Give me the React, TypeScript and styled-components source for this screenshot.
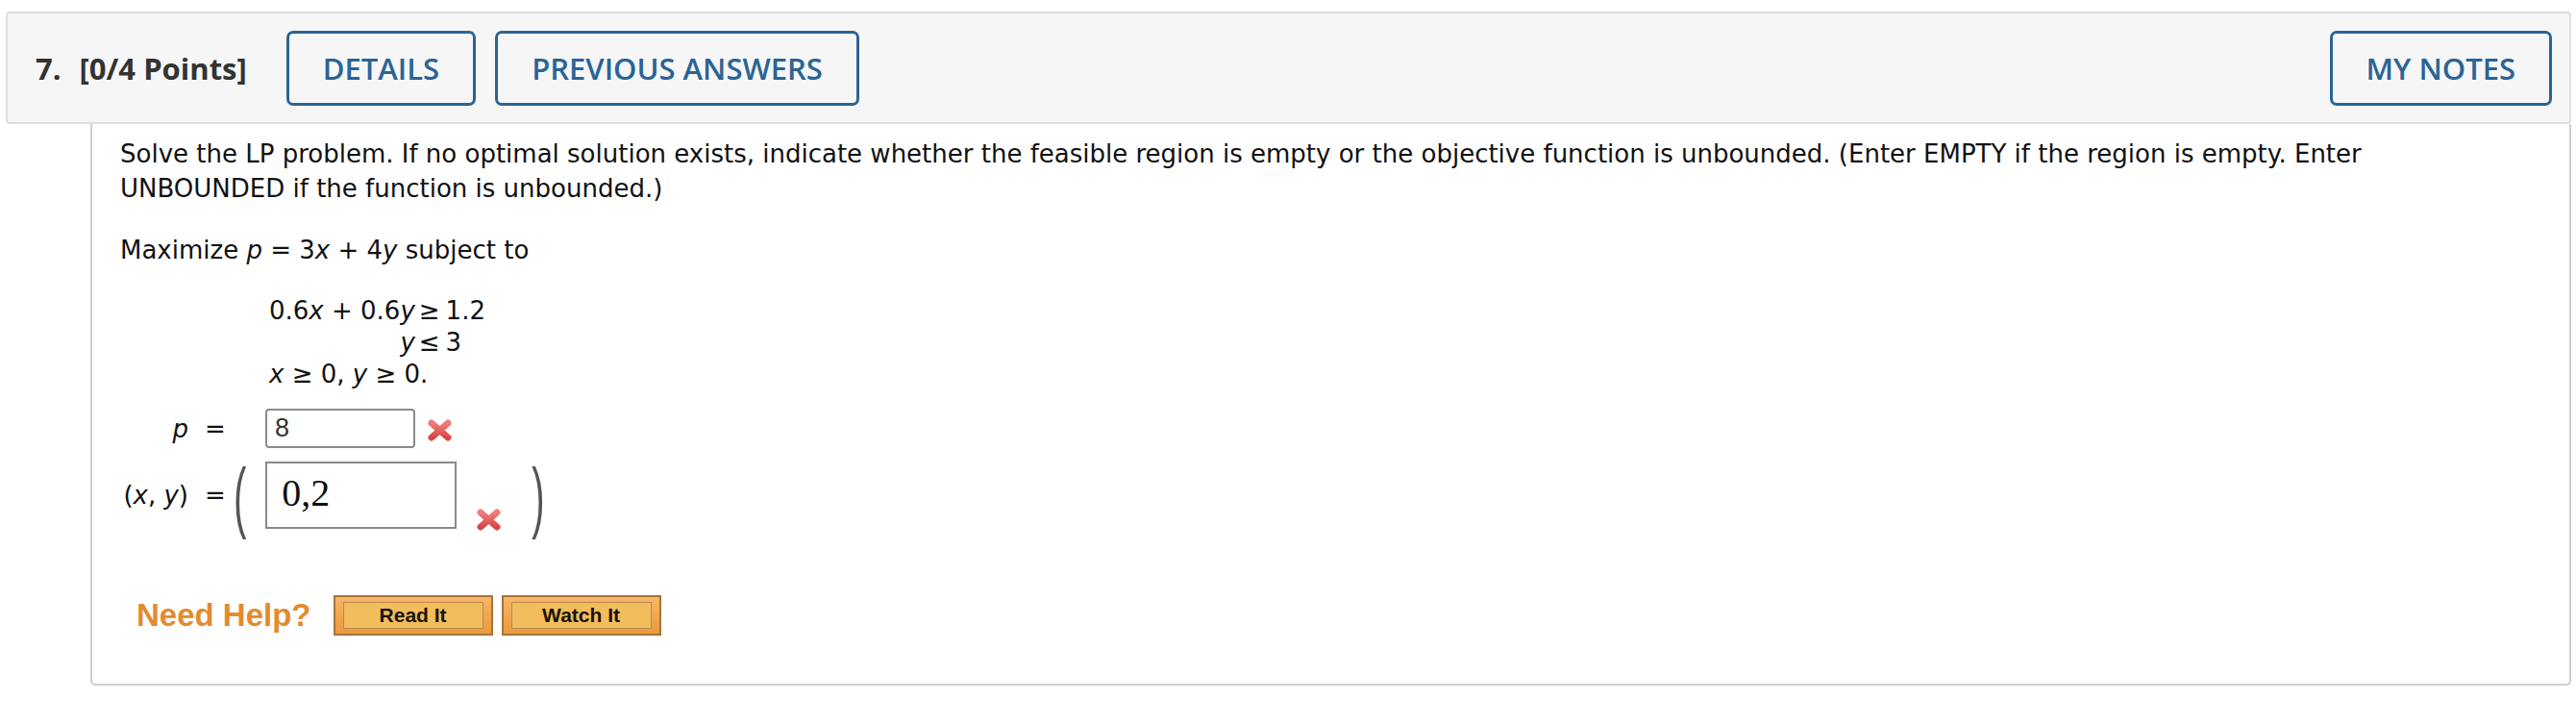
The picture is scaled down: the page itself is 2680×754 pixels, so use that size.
import React from 'react'
import styled, { createGlobalStyle } from 'styled-components'

const GlobalStyle = createGlobalStyle`
    body {
        margin: 0;
        background: #ffffff;
    }
`

const Page = styled.div`
    padding: 12px 5px 0 6px;
    width: 2680px;
    box-sizing: border-box;
`

const Header = styled.div`
    display: flex;
    align-items: center;
    height: 117px;
    box-sizing: border-box;
    background: #f6f6f6;
    border: 2px solid #dedede;
    border-radius: 4px;
    padding: 0 18px 0 29px;
`

const Title = styled.div`
    font-family: "Open Sans", sans-serif;
    font-weight: 700;
    font-size: 31px;
    color: #333333;
    margin-right: 41px;
    white-space: nowrap;

    span {
        margin-right: 19px;
    }
`

const HeaderButton = styled.button<{ $right?: boolean }>`
    height: 78px;
    padding: 0 35px;
    margin-left: ${p => (p.$right ? 'auto' : '0')};
    margin-right: 20px;
    background: transparent;
    border: 3px solid #2a6496;
    border-radius: 7px;
    font-family: "Open Sans", sans-serif;
    font-weight: 600;
    font-size: 31px;
    color: #2a6496;
    cursor: pointer;

    &:last-child {
        margin-right: 0;
    }
`

const Card = styled.div`
    margin-left: 88px;
    border: 2px solid #cfcfcf;
    border-top: none;
    border-radius: 0 0 5px 5px;
    padding: 13px 29px 50px;
    font-family: "DejaVu Sans", Verdana, sans-serif;
    font-size: 26px;
    color: #111111;
`

const Prompt = styled.p`
    margin: 0;
    max-width: 2400px;
    line-height: 36px;
`

const MathLine = styled.div`
    margin-top: 30px;
    line-height: 32px;
`

const Constraints = styled.div`
    display: grid;
    grid-template-columns: auto auto auto;
    justify-content: start;
    margin: 31px 0 0 155px;
    line-height: 33px;
`

const Lhs = styled.span`
    text-align: right;
`

const Rel = styled.span`
    padding: 0 6px 0 4px;
`

const Full = styled.span`
    grid-column: 1 / 4;
`

const AnswerRow = styled.div<{ $top: number }>`
    display: flex;
    align-items: center;
    margin-top: ${p => p.$top}px;
`

const Label = styled.span`
    width: 71px;
    text-align: right;
    white-space: nowrap;
`

const Equals = styled.span<{ $gap: number }>`
    width: 38px;
    padding-left: 9px;
    text-align: center;
    margin-right: ${p => p.$gap}px;
`

const SmallInput = styled.div`
    width: 156px;
    height: 41px;
    box-sizing: border-box;
    border: 2px solid #8a8a8a;
    border-radius: 4px;
    padding-left: 8px;
    font-family: "Liberation Sans", Arial, sans-serif;
    font-size: 27px;
    line-height: 37px;
    color: #333333;
`

const BigInput = styled.div`
    width: 199px;
    height: 70px;
    box-sizing: border-box;
    border: 2px solid #8a8a8a;
    padding-left: 15px;
    font-family: "Liberation Serif", "Times New Roman", serif;
    font-size: 40px;
    line-height: 62px;
    color: #111111;
`

const Paren = styled.span<{ $before: number; $after: number }>`
    display: inline-block;
    font-family: "Liberation Sans", Arial, sans-serif;
    font-size: 40px;
    line-height: 38px;
    color: #555555;
    transform: scaleY(2.05);
    margin-left: ${p => p.$before}px;
    margin-right: ${p => p.$after}px;
`

const Mark = styled.span<{ $low?: boolean; $gap: number }>`
    display: flex;
    margin-left: ${p => p.$gap}px;
    align-self: ${p => (p.$low ? 'flex-end' : 'center')};
    margin-bottom: ${p => (p.$low ? '-3px' : '0')};
    margin-top: ${p => (p.$low ? '0' : '4px')};
`

const HelpRow = styled.div`
    display: flex;
    align-items: center;
    margin-top: 69px;
    padding-left: 17px;
`

const HelpText = styled.span`
    font-family: "Liberation Sans", Arial, sans-serif;
    font-weight: 700;
    font-size: 33px;
    color: #e38b2e;
    margin-right: 23px;
`

const HelpButton = styled.button`
    width: 166px;
    height: 42px;
    box-sizing: border-box;
    padding: 5px 8px;
    margin-right: 9px;
    border: 2px solid #a8743a;
    background: linear-gradient(#f6b566, #eb9a3e);
    cursor: pointer;

    span {
        display: block;
        height: 100%;
        box-sizing: border-box;
        border: 1px solid #b98a52;
        background: #f2bd5c;
        font-family: "Liberation Sans", Arial, sans-serif;
        font-weight: 700;
        font-size: 21px;
        line-height: 26px;
        color: #1a1208;
    }
`

function WrongMark(props: { id: string }) {
    return (
        <svg width="27" height="25" viewBox="0 0 27 25">
            <defs>
                <linearGradient id={props.id} x1="0" y1="0" x2="0" y2="1">
                    <stop offset="0" stopColor="#f07c7c" />
                    <stop offset="1" stopColor="#d84848" />
                </linearGradient>
            </defs>
            <path d="M5 5 L22 20 M22 5 L5 20" stroke={`url(#${props.id})`} strokeWidth="7" strokeLinecap="round" />
        </svg>
    )
}

export default function App() {
    return (
        <Page>
            <GlobalStyle />
            <Header>
                <Title><span>7.</span>[0/4 Points]</Title>
                <HeaderButton>DETAILS</HeaderButton>
                <HeaderButton>PREVIOUS ANSWERS</HeaderButton>
                <HeaderButton $right>MY NOTES</HeaderButton>
            </Header>
            <Card>
                <Prompt>
                    Solve the LP problem. If no optimal solution exists, indicate whether the feasible region is empty or the objective function is unbounded. (Enter EMPTY if the region is empty. Enter UNBOUNDED if the function is unbounded.)
                </Prompt>
                <MathLine>
                    Maximize <i>p</i> = 3<i>x</i> + 4<i>y</i> subject to
                </MathLine>
                <Constraints>
                    <Lhs>0.6<i>x</i> + 0.6<i>y</i></Lhs><Rel>≥</Rel><span>1.2</span>
                    <Lhs><i>y</i></Lhs><Rel>≤</Rel><span>3</span>
                    <Full><i>x</i> ≥ 0, <i>y</i> ≥ 0.</Full>
                </Constraints>
                <AnswerRow $top={19}>
                    <Label><i>p</i></Label>
                    <Equals $gap={33}>=</Equals>
                    <SmallInput>8</SmallInput>
                    <Mark $gap={12}><WrongMark id="x1" /></Mark>
                </AnswerRow>
                <AnswerRow $top={14}>
                    <Label>(<i>x</i>, <i>y</i>)</Label>
                    <Equals $gap={0}>=</Equals>
                    <Paren $before={0} $after={20}>(</Paren>
                    <BigInput>0,2</BigInput>
                    <Mark $low $gap={20}><WrongMark id="x2" /></Mark>
                    <Paren $before={31} $after={0}>)</Paren>
                </AnswerRow>
                <HelpRow>
                    <HelpText>Need Help?</HelpText>
                    <HelpButton><span>Read It</span></HelpButton>
                    <HelpButton><span>Watch It</span></HelpButton>
                </HelpRow>
            </Card>
        </Page>
    )
}
